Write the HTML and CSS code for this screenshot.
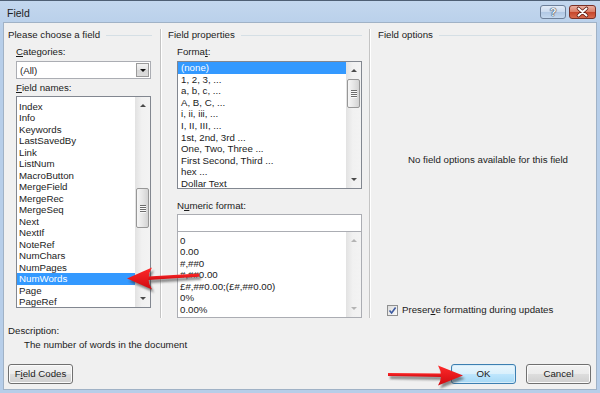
FILE: index.html
```html
<!DOCTYPE html>
<html>
<head>
<meta charset="utf-8">
<link rel="stylesheet" href="styles.css">
</head>
<body>
<div class="window">
  <div class="titlebar">
    <span class="title">Field</span>
    <div class="caption-btns">
      <div class="cbtn help">?</div>
      <div class="cbtn close">
        <svg width="27" height="14" viewBox="0 0 27 14"><path d="M9.5 3.5 L17.5 10.5 M17.5 3.5 L9.5 10.5" stroke="#5a1a12" stroke-width="3.6" stroke-linecap="round"/><path d="M9.5 3.5 L17.5 10.5 M17.5 3.5 L9.5 10.5" stroke="#fff" stroke-width="2" stroke-linecap="round"/></svg>
      </div>
    </div>
  </div>
  <div class="client">
    <div class="panels">
      <section class="col col1">
        <div class="group-head"><span>Please choose a field</span><i class="rule"></i></div>
        <div class="body1">
          <div class="lbl"><u>C</u>ategories:</div>
          <div class="combo"><span>(All)</span><span class="drop"></span></div>
          <div class="lbl tight"><u>F</u>ield names:</div>
          <div class="list names">
            <ul class="items">
              <li>Index</li><li>Info</li><li>Keywords</li><li>LastSavedBy</li><li>Link</li><li>ListNum</li><li>MacroButton</li><li>MergeField</li><li>MergeRec</li><li>MergeSeq</li><li>Next</li><li>NextIf</li><li>NoteRef</li><li>NumChars</li><li>NumPages</li><li class="sel">NumWords</li><li>Page</li><li>PageRef</li>
            </ul>
            <div class="vscroll">
              <span class="arr up"></span>
              <div class="track"><span class="thumb t-names"><i></i><i></i><i></i><i></i></span></div>
              <span class="arr down"></span>
            </div>
          </div>
        </div>
      </section>
      <div class="sep"></div>
      <section class="col col2">
        <div class="group-head"><span>Field properties</span><i class="rule"></i></div>
        <div class="body2">
          <div class="lbl">Forma<u>t</u>:</div>
          <div class="list fmt">
            <ul class="items fmt-items">
              <li class="sel">(none)</li><li>1, 2, 3, ...</li><li>a, b, c, ...</li><li>A, B, C, ...</li><li>i, ii, iii, ...</li><li>I, II, III, ...</li><li>1st, 2nd, 3rd ...</li><li>One, Two, Three ...</li><li>First Second, Third ...</li><li>hex ...</li><li>Dollar Text</li>
            </ul>
            <div class="vscroll">
              <span class="arr up"></span>
              <div class="track"><span class="thumb t-fmt"><i></i><i></i><i></i><i></i></span></div>
              <span class="arr down"></span>
            </div>
          </div>
          <div class="lbl numlbl">N<u>u</u>meric format:</div>
          <div class="textbox"></div>
          <div class="list num">
            <ul class="items num-items">
              <li>0</li><li>0.00</li><li>#,##0</li><li>#,##0.00</li><li>£#,##0.00;(£#,##0.00)</li><li>0%</li><li>0.00%</li>
            </ul>
            <div class="vscroll off">
              <span class="arr up"></span>
              <div class="track"></div>
              <span class="arr down"></span>
            </div>
          </div>
        </div>
      </section>
      <div class="sep"></div>
      <section class="col col3">
        <div class="group-head"><span>Field options</span><i class="rule"></i></div>
        <div class="no-opts">No field options available for this field</div>
        <div class="spacer"></div>
        <div class="check">
          <span class="cb"><svg width="9" height="9" viewBox="0 0 9 9"><path d="M1.5 4.5 L3.6 7 L7.6 1.5" fill="none" stroke="#3d5aa0" stroke-width="1.6"/></svg></span>
          <span>Preser<u>v</u>e formatting during updates</span>
        </div>
      </section>
    </div>
    <div class="desc-label">Description:</div>
    <div class="desc-text">The number of words in the document</div>
    <div class="buttons">
      <div class="btn">F<u>i</u>eld Codes</div>
      <div class="btn ok">OK</div>
      <div class="btn">Cancel</div>
    </div>
  </div>
  <svg class="arrows" width="600" height="393" viewBox="0 0 600 393">
    <defs>
      <filter id="sh" x="-20%" y="-60%" width="140%" height="220%"><feGaussianBlur stdDeviation="1.3"/></filter>
      <linearGradient id="rg" x1="0" y1="0" x2="0" y2="1"><stop offset="0" stop-color="#ff2a2a"/><stop offset="1" stop-color="#cf0a10"/></linearGradient>
    </defs>
    <g fill="#303030" opacity="0.55" filter="url(#sh)" transform="translate(2,3)">
      <path d="M199 272.5 L148 275.5 L148 279 L199 275.8 Z"/>
      <path d="M127 277.5 L152 266.5 Q145 277.5 152 288.5 Z"/>
      <path d="M388 372 L442 372.5 L442 376 L388 375 Z"/>
      <path d="M463 374.5 L438 364.5 Q444 374.5 438 384.5 Z"/>
    </g>
    <g fill="url(#rg)">
      <path d="M199 272.5 L148 275.5 L148 279 L199 275.8 Z"/>
      <path d="M127 277.5 L152 266.5 Q145 277.5 152 288.5 Z"/>
      <path d="M388 372 L442 372.5 L442 376 L388 375 Z"/>
      <path d="M463 374.5 L438 364.5 Q444 374.5 438 384.5 Z"/>
    </g>
  </svg>
</div>
</body>
</html>
```

FILE: styles.css
```css
* { box-sizing: border-box; }
html, body { margin: 0; padding: 0; }
body {
  font-family: "Liberation Sans", Arial, sans-serif;
  font-size: 9.7px;
  color: #1b1b1b;
  background: #fff;
}
u { text-decoration: underline; text-underline-offset: 1px; }

.window {
  position: relative;
  width: 600px;
  height: 393px;
  display: flex;
  flex-direction: column;
  padding: 0 3px 3px;
  border-top: 1px solid #4e5f74;
  background: linear-gradient(#c3d7ee, #b7cee9 30px, #b7cee9);
  overflow: hidden;
}

.titlebar {
  height: 21px;
  display: flex;
  align-items: flex-start;
  justify-content: space-between;
  padding: 0 1px 0 4px;
}
.title {
  margin-top: 6px;
  line-height: 12px;
  font-size: 10.5px;
  color: #1e1e1e;
}
.caption-btns { display: flex; margin-top: 4px; }
.cbtn {
  height: 14px;
  border: 1px solid #6d7f99;
  border-radius: 3px;
}
.help {
  width: 26px;
  background: linear-gradient(#e3ecf7, #c9d9ee 50%, #b0c7e4 51%, #c4d8ef);
  color: #f4f7fb;
  font-weight: bold;
  font-size: 11px;
  line-height: 12px;
  text-align: center;
  text-shadow: 0 0 1px #2c3a52, 0 0 1px #2c3a52, 0 0 1px #2c3a52;
}
.close {
  width: 27px;
  margin-left: 3px;
  border-color: #7a3026;
  background: linear-gradient(#eab0a2, #d97b64 50%, #c5452b 51%, #d86a4e);
}
.close svg { display: block; margin: -1px 0 0 -1px; }

.client {
  flex: 1;
  display: flex;
  flex-direction: column;
  background: #f0f0f0;
  border: 1px solid #a0b2c6;
  padding: 0 4px;
}

.panels {
  display: flex;
  margin-top: 6px;
  height: 289px;
}
.col { display: flex; flex-direction: column; }
.col1 { width: 152px; }
.col2 { width: 207px; padding-left: 6px; }
.col3 { flex: 1; padding-left: 7px; }
.sep {
  width: 2px;
  border-left: 1px solid #c4c4c4;
  background: #ffffff;
}

.group-head {
  display: flex;
  align-items: center;
  height: 12px;
  line-height: 12px;
  white-space: nowrap;
}
.rule {
  flex: 1;
  height: 1px;
  margin-left: 6px;
  background: #d5dfe5;
}
.col1 .rule { margin-right: 8px; }
.col2 .rule { margin-right: 7px; }

.lbl { line-height: 12px; margin-top: 5px; }
.lbl.tight { margin-top: 3px; }
.body1 { padding-left: 8px; }
.body2 { padding-left: 9px; }

.combo {
  margin-top: 3px;
  width: 135px;
  height: 18px;
  border: 1px solid #abadb3;
  background: #fff;
  display: flex;
  align-items: center;
  padding-left: 3px;
}
.drop {
  margin-left: auto;
  margin-right: 1px;
  width: 13px;
  height: 14px;
  border: 1px solid #9a9a9a;
  background: linear-gradient(#f3f3f3, #e3e3e3 50%, #d6d6d6 51%, #dcdcdc);
  display: flex;
  align-items: center;
  justify-content: center;
}
.drop::before {
  content: "";
  border-left: 3px solid transparent;
  border-right: 3px solid transparent;
  border-top: 3px solid #111;
}

.list {
  display: flex;
  background: #fff;
  border: 1px solid #828790;
  overflow: hidden;
}
.list.names { margin-top: 2px; width: 135px; height: 212px; }
.list.fmt { margin-top: 3px; width: 185px; height: 128px; }
.list.num { margin-top: -1px; width: 185px; height: 87px; border-color: #abadb3; }

.items {
  flex: 1;
  list-style: none;
  margin: 0;
  padding: 3.5px 0 0;
  overflow: hidden;
}
.items li {
  height: 11.5px;
  line-height: 11.5px;
  padding-left: 2px;
  white-space: nowrap;
}
.items.fmt-items { padding-top: 0; }
.items.fmt-items li { height: 11.6px; line-height: 11.6px; padding-left: 3px; }
.items.num-items { padding-top: 2.5px; }
.items li.sel { background: #3399ff; color: #fff; }

.vscroll {
  width: 15px;
  display: flex;
  flex-direction: column;
  background: linear-gradient(to right, #e2e2e2, #f1f1f1 45%, #f3f3f3);
}
.arr {
  height: 17px;
  display: flex;
  align-items: center;
  justify-content: center;
}
.arr::before {
  content: "";
  border-left: 3px solid transparent;
  border-right: 3px solid transparent;
}
.arr.up::before { border-bottom: 3px solid #4a4a4a; }
.arr.down::before { border-top: 3px solid #4a4a4a; }
.vscroll.off .arr.up::before { border-bottom-color: #b4b4b4; }
.vscroll.off .arr.down::before { border-top-color: #b4b4b4; }
.track { flex: 1; }
.thumb {
  margin: 0 1px;
  border: 1px solid #979797;
  border-radius: 2px;
  background: linear-gradient(to right, #f6f6f6, #e6e6e6 50%, #d3d3d3);
  display: flex;
  flex-direction: column;
  align-items: center;
  justify-content: center;
  gap: 1px;
}
.thumb i {
  width: 6px;
  height: 1px;
  background: #6c6c6c;
  box-shadow: 0 1px 0 #fafafa;
}
.t-names { margin-top: 74px; height: 40px; }
.t-fmt { margin-top: 0; height: 29px; }

.numlbl { margin-top: 11px; }
.textbox {
  margin-top: 2px;
  width: 185px;
  height: 18px;
  border: 1px solid #abadb3;
  background: #fff;
}

.no-opts {
  margin-top: 113px;
  padding-left: 6px;
  line-height: 12px;
  text-align: center;
  white-space: nowrap;
}
.spacer { flex: 1; }
.check {
  display: flex;
  align-items: center;
  padding-left: 9px;
  margin-bottom: 2px;
  line-height: 12px;
}
.cb {
  width: 11px;
  height: 11px;
  border: 1px solid #8e8f8f;
  background: linear-gradient(135deg, #dcdcdc, #fbfbfb);
  margin-right: 4px;
  display: flex;
  align-items: center;
  justify-content: center;
}
.cb svg { display: block; }

.desc-label { margin-top: 7px; line-height: 12px; }
.desc-text { margin-top: 2px; padding-left: 16px; line-height: 12px; }

.buttons {
  display: flex;
  margin-top: 13px;
  padding-right: 1px;
  gap: 10px;
}
.btn {
  width: 65px;
  height: 20px;
  border: 1px solid #707070;
  border-radius: 3px;
  background: linear-gradient(#f2f2f2, #ebebeb 50%, #dddddd 51%, #cfcfcf);
  box-shadow: inset 0 0 0 1px #fbfbfb;
  display: flex;
  align-items: center;
  justify-content: center;
  line-height: 12px;
}
.btn.ok {
  margin-left: auto;
  border-color: #3c7fb1;
  background: linear-gradient(#eaf6fd, #d9f0fc 50%, #bee6fd 51%, #a7d9f5);
  box-shadow: inset 0 0 0 1px #d6ecf9;
}

.arrows {
  position: absolute;
  left: 0;
  top: 0;
  pointer-events: none;
}
```
